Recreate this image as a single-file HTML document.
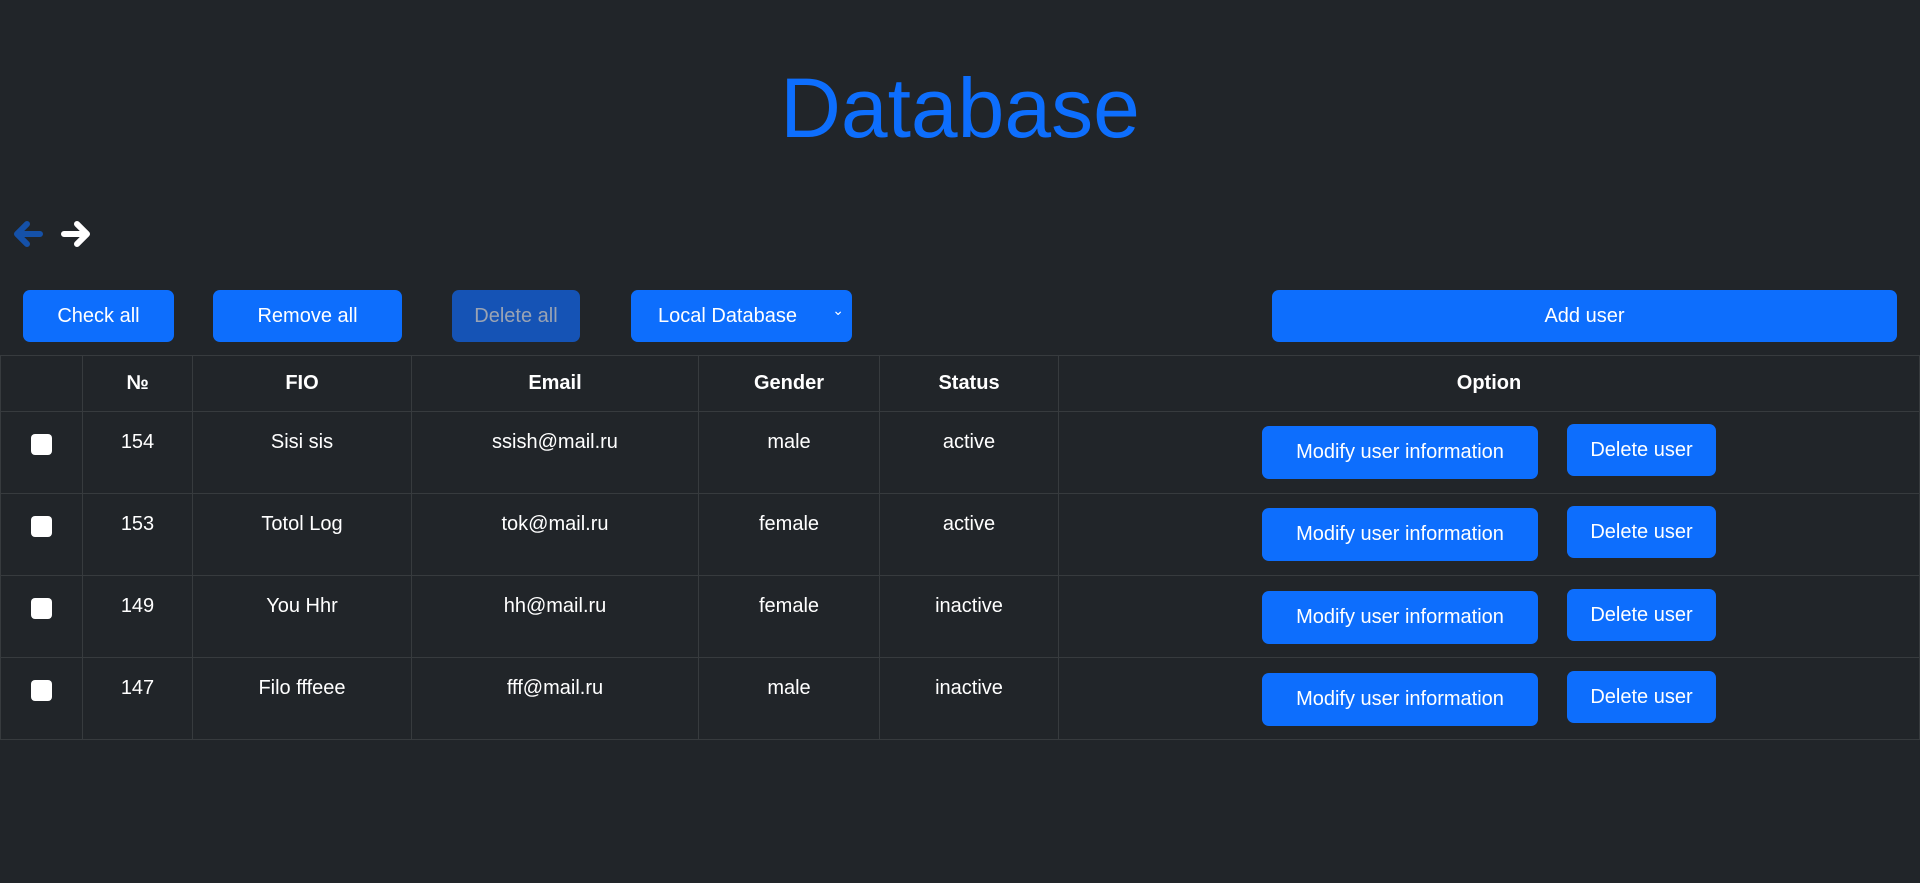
<!DOCTYPE html>
<html><head><meta charset="utf-8"><style>
*{box-sizing:border-box;margin:0;padding:0}
body{width:1920px;height:883px;background:#212529;color:#fff;font-family:"Liberation Sans",sans-serif;position:relative;overflow:hidden}
.abs{position:absolute}
h1{position:absolute;left:0;width:1920px;top:58px;text-align:center;color:#0d6efd;font-size:84px;font-weight:normal;line-height:100px}
.btn{position:absolute;background:#0d6efd;color:#fff;border-radius:7px;font-size:20px;display:flex;align-items:center;justify-content:center}
table{position:absolute;left:0;top:355px;width:1920px;border-collapse:collapse;font-size:20px}
td,th{border:1px solid #373b3e;text-align:center;vertical-align:top}
th{height:56px;vertical-align:middle;font-weight:bold}
td{height:82px;padding-top:19px}
.cb{display:inline-block;width:21px;height:21px;background:#fff;border-radius:4px;margin-top:3px}
</style></head><body>
<h1>Database</h1>
<svg class="abs" style="left:12px;top:218px" width="32" height="32" viewBox="0 0 32 32"><path d="M28 16H6M15 6L5 16l10 10" stroke="#1551a8" stroke-width="6" fill="none" stroke-linecap="round" stroke-linejoin="round"/></svg>
<svg class="abs" style="left:60px;top:218px" width="32" height="32" viewBox="0 0 32 32"><path d="M4 16h22M17 6l10 10-10 10" stroke="#fff" stroke-width="6" fill="none" stroke-linecap="round" stroke-linejoin="round"/></svg>
<div class="btn" style="left:23px;top:290px;width:151px;height:52px">Check all</div>
<div class="btn" style="left:213px;top:290px;width:189px;height:52px">Remove all</div>
<div class="btn" style="left:452px;top:290px;width:128px;height:52px;background:#1553b5;color:#9aa3b3">Delete all</div>
<div class="btn" style="left:631px;top:290px;width:221px;height:52px;justify-content:flex-start;padding-left:27px">Local Database<span style="position:absolute;right:8px;top:12px;font-size:14px">&#8964;</span></div>
<div class="btn" style="left:1272px;top:290px;width:625px;height:52px">Add user</div>
<table>
<tr><th style="width:82px"></th><th style="width:110px">№</th><th style="width:219px">FIO</th><th style="width:287px">Email</th><th style="width:181px">Gender</th><th style="width:179px">Status</th><th>Option</th></tr>
<tr><td><span class="cb"></span></td><td>154</td><td>Sisi sis</td><td>ssish@mail.ru</td><td>male</td><td>active</td><td></td></tr>
<tr><td><span class="cb"></span></td><td>153</td><td>Totol Log</td><td>tok@mail.ru</td><td>female</td><td>active</td><td></td></tr>
<tr><td><span class="cb"></span></td><td>149</td><td>You Hhr</td><td>hh@mail.ru</td><td>female</td><td>inactive</td><td></td></tr>
<tr><td><span class="cb"></span></td><td>147</td><td>Filo fffeee</td><td>fff@mail.ru</td><td>male</td><td>inactive</td><td></td></tr>
</table>
<div class="btn" style="left:1262px;top:426px;width:276px;height:53px">Modify user information</div>
<div class="btn" style="left:1567px;top:424px;width:149px;height:52px">Delete user</div>
<div class="btn" style="left:1262px;top:508px;width:276px;height:53px">Modify user information</div>
<div class="btn" style="left:1567px;top:506px;width:149px;height:52px">Delete user</div>
<div class="btn" style="left:1262px;top:591px;width:276px;height:53px">Modify user information</div>
<div class="btn" style="left:1567px;top:589px;width:149px;height:52px">Delete user</div>
<div class="btn" style="left:1262px;top:673px;width:276px;height:53px">Modify user information</div>
<div class="btn" style="left:1567px;top:671px;width:149px;height:52px">Delete user</div>
</body></html>
